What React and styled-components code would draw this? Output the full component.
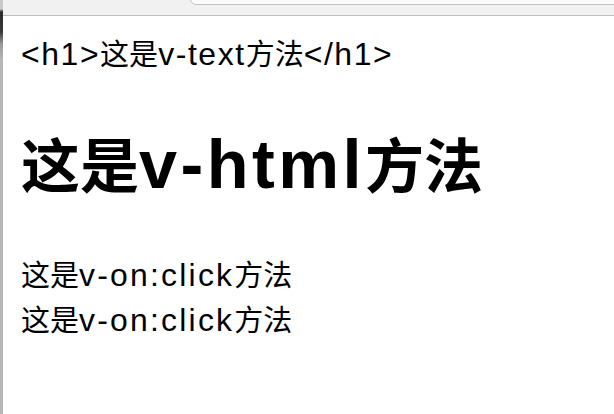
import React from 'react';
import styled, { createGlobalStyle } from 'styled-components';

const GlobalStyle = createGlobalStyle`
    html, body {
        margin: 0;
        padding: 0;
        background: #ffffff;
    }
`

const Window = styled.div`
    display: flex;
    width: 614px;
    height: 414px;
    overflow: hidden;
    background: #ffffff;
`

const Edge = styled.div`
    width: 3px;
    flex-shrink: 0;
    background: linear-gradient(
        to bottom,
        #c8c8c8 0px,
        #c8c8c8 9px,
        #2a2a2a 12px,
        #3a3a3a 32px,
        #9a9a9a 44px,
        #b7b7b7 60px,
        #b7b7b7 100%
    );
`

const Viewport = styled.div`
    flex: 1;
    display: flex;
    flex-direction: column;
    min-width: 0;
`

const Toolbar = styled.div`
    height: 15px;
    flex-shrink: 0;
    display: flex;
    padding-left: 187px;
    background: #f1f1f1;
    border-bottom: 1px solid #bdbdbd;
    overflow: hidden;
`

const AddressBox = styled.div`
    flex: 1;
    height: 12px;
    margin-top: -9px;
    margin-right: -10px;
    background: #fbfbfb;
    border: 1px solid #c3c3c3;
    border-radius: 0 0 6px 6px;
`

const Content = styled.div`
    padding: 18px 0 0 18px;
    font-family: "Liberation Sans", "Noto Sans CJK SC", sans-serif;
    font-size: 29px;
    color: #000000;
`

// latin runs are drawn larger than the CJK ones, as in the reference font
const Latin = styled.span`
    font-size: ${props => props.$scale || 1.1}em;
    letter-spacing: ${props => props.$track || 0.05}em;
`

const Raw = styled.div`
    line-height: 40px;
`

const Heading = styled.h1`
    margin: 54px 0 49px;
    font-size: 59px;
    font-weight: 700;
    line-height: 72px;
`

const Line = styled.div`
    line-height: 44px;
`

class App extends React.Component {

    render() {
        return (
            <Window>
                <GlobalStyle />
                <Edge />
                <Viewport>
                    <Toolbar>
                        <AddressBox />
                    </Toolbar>

                    <Content>
                        <Raw><Latin>&lt;h1&gt;</Latin>这是<Latin>v-text</Latin>方法<Latin>&lt;/h1&gt;</Latin></Raw>

                        <Heading>这是<Latin $scale={1.16}>v-html</Latin>方法</Heading>

                        <Line>这是<Latin $track={0.07}>v-on:click</Latin>方法</Line>
                        <Line>这是<Latin $track={0.07}>v-on:click</Latin>方法</Line>
                    </Content>
                </Viewport>
            </Window>
        )
    }
}

export default App
